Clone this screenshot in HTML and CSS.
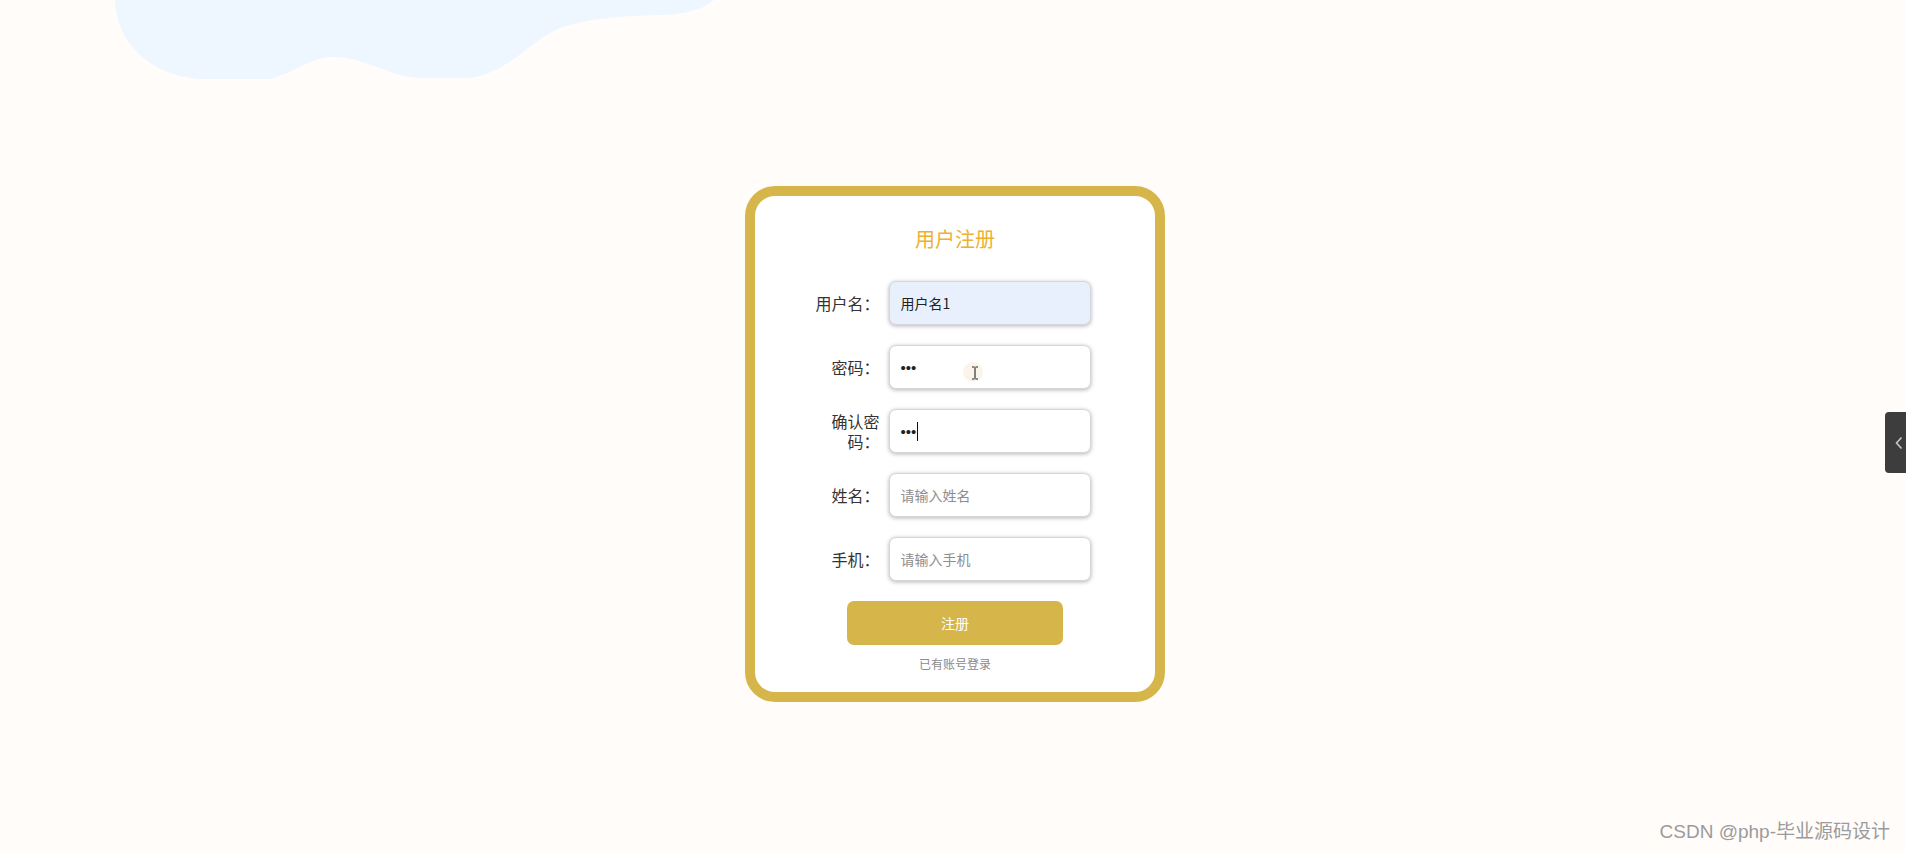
FILE: index.html
```html
<!DOCTYPE html>
<html lang="zh-CN">
<head>
<meta charset="utf-8">
<title>用户注册</title>
<link rel="stylesheet" href="styles.css">
</head>
<body>
<div class="page">
  <svg class="cloud" width="760" height="90" viewBox="0 0 760 90" aria-hidden="true">
    <path d="M115,0 C116,42 150,76 200,79 L270,79 C300,70 310,58 330,57 C365,56 385,76 420,78 L470,78 C510,72 530,40 560,28 C590,18 620,16 660,15 C690,14 705,8 714,0 Z" fill="#eef7ff"/>
  </svg>

  <main class="wrap">
    <section class="card">
      <h1 class="title">用户注册</h1>
      <form class="form">
        <div class="row">
          <label class="label">用户名：</label>
          <div class="field"><input class="input autofill" type="text" value="用户名1"></div>
        </div>
        <div class="row">
          <label class="label">密码：</label>
          <div class="field">
            <input class="input pwd" type="password" value="123">
            <span class="click-glow"></span>
            <svg class="ibeam" width="8" height="14" viewBox="0 0 8 14" aria-hidden="true">
              <path d="M1 1h2.5M4.5 1H7M4 1.5v11M1 13h2.5M4.5 13H7" stroke="#222" stroke-width="1.1" fill="none"/>
            </svg>
          </div>
        </div>
        <div class="row">
          <label class="label">确认密码：</label>
          <div class="field">
            <input class="input pwd" type="password" value="123">
            <span class="caret"></span>
          </div>
        </div>
        <div class="row">
          <label class="label">姓名：</label>
          <div class="field"><input class="input" type="text" placeholder="请输入姓名"></div>
        </div>
        <div class="row">
          <label class="label">手机：</label>
          <div class="field"><input class="input" type="text" placeholder="请输入手机"></div>
        </div>
        <button class="submit" type="button">注册</button>
        <a class="login-link">已有账号登录</a>
      </form>
    </section>
  </main>

  <div class="side-tab">
    <svg width="8" height="14" viewBox="0 0 8 14" aria-hidden="true">
      <path d="M6.5 1.5L1.5 7l5 5.5" stroke="#c8c8c8" stroke-width="1.6" fill="none"/>
    </svg>
  </div>

  <div class="watermark">CSDN @php-毕业源码设计</div>
</div>
</body>
</html>
```

FILE: styles.css
```css
html, body {
  margin: 0;
  padding: 0;
}

body {
  background: #fffcf9;
  font-family: "Noto Sans CJK SC", "Noto Sans", "Liberation Sans", sans-serif;
  color: #333;
}

.page {
  position: relative;
  width: 100%;
  height: 851px;
  overflow: hidden;
}

.cloud {
  position: absolute;
  left: 0;
  top: 0;
}

.wrap {
  display: flex;
  justify-content: center;
  padding-top: 186px;
  padding-left: 4px;
}

.card {
  box-sizing: border-box;
  width: 420px;
  height: 516px;
  border: 10px solid #d6b54b;
  border-radius: 30px;
  background: #ffffff;
  padding-top: 30px;
}

.title {
  margin: 0;
  text-align: center;
  font-size: 20px;
  line-height: 26px;
  font-weight: 400;
  color: #ebb230;
}

.form {
  margin-top: 29px;
  display: flex;
  flex-direction: column;
  align-items: center;
}

.row {
  display: flex;
  align-items: center;
  gap: 9px;
  height: 44px;
  margin-bottom: 20px;
  margin-left: -10px;
}

.label {
  width: 70px;
  text-align: right;
  font-size: 16px;
  line-height: 20px;
  color: #333;
}

.field {
  position: relative;
  width: 202px;
  height: 44px;
}

.input {
  box-sizing: border-box;
  width: 202px;
  height: 44px;
  border: 1px solid #d6d6dc;
  border-radius: 7px;
  background: #ffffff;
  box-shadow: 0 1px 4px rgba(0, 0, 0, 0.3);
  padding: 0 11px;
  font-family: "Noto Sans CJK SC", "Noto Sans", "Liberation Sans", sans-serif;
  font-size: 14px;
  color: #222;
  outline: none;
}

.input::placeholder {
  color: #8e8e8e;
}

.input.pwd {
  font-family: "Liberation Sans", sans-serif;
  font-size: 15px;
}

.input.autofill {
  background: #e8f0fe;
}

.click-glow {
  position: absolute;
  left: 74px;
  top: 17px;
  width: 20px;
  height: 20px;
  border-radius: 50%;
  background: #fbf4ea;
}

.ibeam {
  position: absolute;
  left: 82px;
  top: 21px;
}

.caret {
  position: absolute;
  left: 28px;
  top: 13px;
  width: 1px;
  height: 19px;
  background: #111;
}

.submit {
  width: 216px;
  height: 44px;
  border: none;
  border-radius: 7px;
  background: #d6b54b;
  color: #ffffff;
  font-family: "Noto Sans CJK SC", "Noto Sans", "Liberation Sans", sans-serif;
  font-size: 14px;
}

.login-link {
  margin-top: 11px;
  font-size: 12px;
  line-height: 16px;
  color: #8a8a8a;
}

.side-tab {
  position: absolute;
  right: 0;
  top: 412px;
  width: 21px;
  height: 61px;
  background: #3d3d3d;
  border-radius: 4px 0 0 4px;
  display: flex;
  align-items: center;
  padding-left: 10px;
  box-sizing: border-box;
}

.watermark {
  position: absolute;
  right: 16px;
  bottom: 8px;
  font-family: "Liberation Sans", "Noto Sans CJK SC", sans-serif;
  font-size: 19px;
  line-height: 22px;
  color: #9b9b9b;
  text-shadow: 0 0 2px #ffffff;
}
```
